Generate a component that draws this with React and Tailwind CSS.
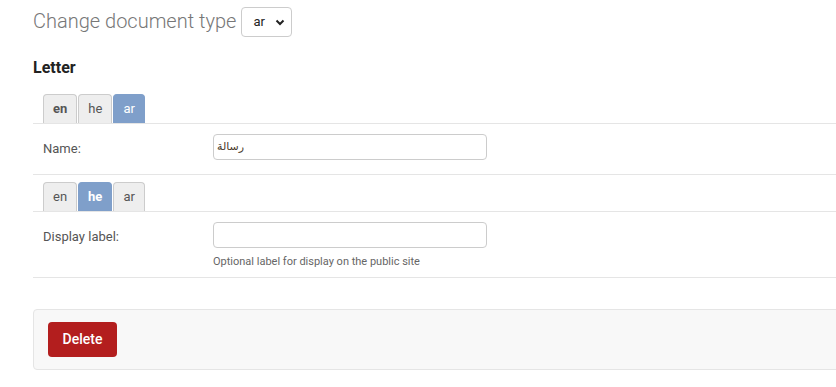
import React from "react";

function Tabs({ active, bold }) {
  const langs = ["en", "he", "ar"];
  return (
    <div className="flex gap-px pl-[10px] border-b border-[#e5e5e5] h-[30px] items-end">
      {langs.map((l) => (
        <div
          key={l}
          className={
            "h-[29px] px-[9px] flex items-center justify-center rounded-t-[4px] border border-b-0 text-[13px] " +
            (l === active
              ? "bg-[#7f9fca] border-[#7f9fca] text-white "
              : "bg-[#eeeeee] border-[#cccccc] text-[#555] ") +
            (l === bold ? "font-bold " : "")
          }
        >
          {l}
        </div>
      ))}
    </div>
  );
}

export default function App() {
  return (
    <div className="w-[836px] h-[387px] overflow-hidden bg-white pl-[33px] font-['Roboto',sans-serif] text-[#333]">
      <div className="flex items-center h-[44px]">
        <span className="text-[20px] font-light text-[#777] leading-none -mt-[2px]">Change document type</span>
        <div className="ml-[5px] w-[51px] h-[30px] border border-[#ccc] rounded-[4px] flex items-center pl-[11px] pr-[6px] justify-between text-[13px] text-[#222]">
          <span>ar</span>
          <svg width="10" height="8" viewBox="0 0 10 8">
            <path d="M1.5 2.5 L5 6 L8.5 2.5" fill="none" stroke="#222" strokeWidth="2" />
          </svg>
        </div>
      </div>
      <div className="mt-[14px] text-[16px] font-bold text-[#222] leading-[20px]">Letter</div>
      <div className="mt-[16px] w-[900px]">
        <Tabs active="ar" bold="en" />
        <div className="flex items-start h-[51px] border-b border-[#e5e5e5] pt-[10px]">
          <div className="w-[180px] pl-[10px] text-[13px] text-[#555] leading-[26px] mt-[2px]">Name:</div>
          <div className="w-[274px] h-[26px] border border-[#ccc] rounded-[4px] flex items-center px-[3px] text-[11px] text-[#4a3a2a] font-['DejaVu_Sans',sans-serif]">
            رسالة
          </div>
        </div>
        <div className="pt-[7px]">
          <Tabs active="he" bold="he" />
        </div>
        <div className="flex items-start h-[66px] border-b border-[#e5e5e5] pt-[10px]">
          <div className="w-[180px] pl-[10px] text-[13px] text-[#555] leading-[26px] mt-[2px]">Display label:</div>
          <div>
            <div className="w-[274px] h-[26px] border border-[#ccc] rounded-[4px]"></div>
            <div className="mt-[7px] text-[11px] text-[#666] leading-[13px]">Optional label for display on the public site</div>
          </div>
        </div>
        <div className="mt-[31px] h-[61px] bg-[#f8f8f8] border border-[#e5e5e5] rounded-[4px] flex items-center pl-[14px]">
          <button className="w-[69px] h-[35px] bg-[#b31e1e] rounded-[4px] text-white text-[14px] font-medium">Delete</button>
        </div>
      </div>
    </div>
  );
}
